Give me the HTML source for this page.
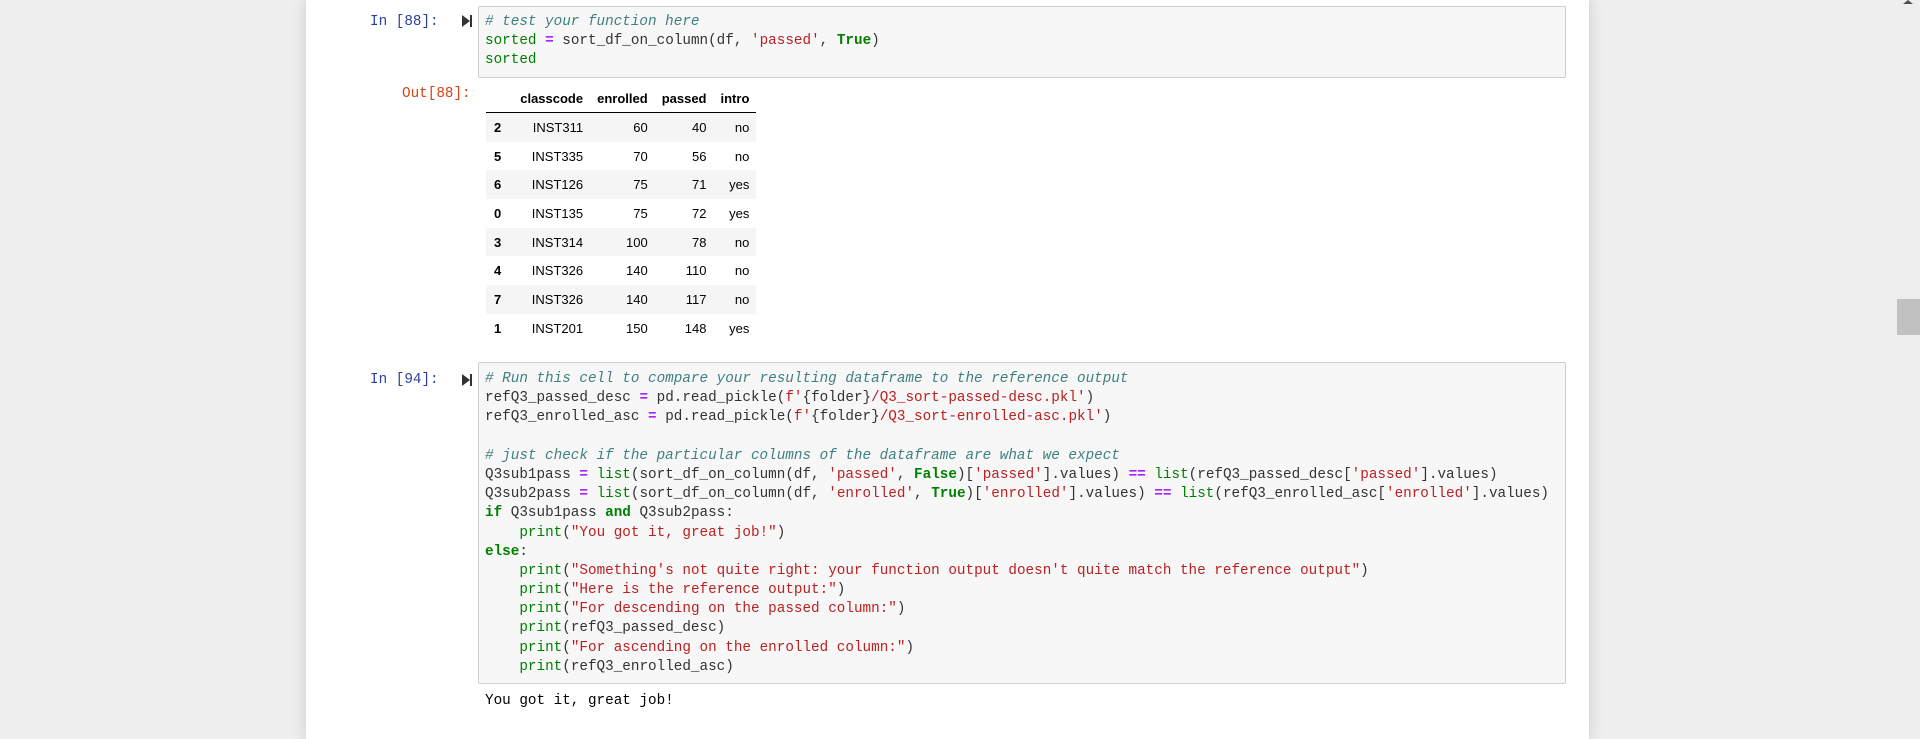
<!DOCTYPE html>
<html><head><meta charset="utf-8"><style>
html,body{margin:0;padding:0;width:1920px;height:739px;overflow:hidden;background:#eeeeee;font-family:"Liberation Sans",sans-serif;}
#nb{position:absolute;left:306px;top:0;width:1283px;height:739px;background:#fff;box-shadow:0 0 12px 1px rgba(87,87,87,0.2);}
.p{position:absolute;font-family:"Liberation Mono",monospace;font-size:14.3px;line-height:20px;white-space:pre;}
.in{color:#303F9F;}
.out{color:#D84315;}
.box{position:absolute;background:#f7f7f7;border:1px solid #cfcfcf;border-radius:2px;}
.code{position:absolute;left:485px;font-family:"Liberation Mono",monospace;font-size:14.3px;color:#333;}
.code div{height:19.2px;line-height:19.2px;white-space:pre;}
.c{color:#408080;font-style:italic}.k{color:#008000;font-weight:bold}.s{color:#BA2121}.o{color:#AA22FF;font-weight:bold}.b{color:#008000}
.run{position:absolute;width:0;height:0;border-top:6px solid transparent;border-bottom:6px solid transparent;border-left:8px solid #333;}
.runb{position:absolute;width:2px;height:12px;background:#333;}
table{position:absolute;left:486px;top:84px;border-collapse:collapse;font-size:13px;color:#000;}
th{font-weight:bold;height:28px;padding:0 7px;text-align:right;border-bottom:1px solid #000;}
td{height:28.7px;padding:0 7px;text-align:right;}
td.i{font-weight:bold;text-align:left;padding-left:8px;}
tbody tr:nth-child(odd){background:#f5f5f5;}
#sb{position:absolute;left:1897px;top:0;width:23px;height:739px;background:#eeeeee;}
#th{position:absolute;left:1897px;top:299px;width:23px;height:36px;background:#c1c1c1;}
</style></head><body>
<div id="nb"></div>
<div class="p in" style="left:370px;top:12px">In [88]:</div>
<div class="run" style="left:462px;top:15px"></div><div class="runb" style="left:470px;top:15px"></div>
<div class="box" style="left:478px;top:6px;width:1086px;height:70px"></div>
<div class="code" style="top:13px"><div><span class="c"># test your function here</span></div><div><span class="b">sorted</span> <span class="o">=</span> sort_df_on_column(df, <span class="s">'passed'</span>, <span class="k">True</span>)</div><div><span class="b">sorted</span></div></div>
<div class="p out" style="left:402px;top:84px">Out[88]:</div>
<table>
<thead><tr><th></th><th style="padding-left:12px">classcode</th><th>enrolled</th><th>passed</th><th>intro</th></tr></thead>
<tbody>
<tr><td class="i">2</td><td>INST311</td><td>60</td><td>40</td><td>no</td></tr>
<tr><td class="i">5</td><td>INST335</td><td>70</td><td>56</td><td>no</td></tr>
<tr><td class="i">6</td><td>INST126</td><td>75</td><td>71</td><td>yes</td></tr>
<tr><td class="i">0</td><td>INST135</td><td>75</td><td>72</td><td>yes</td></tr>
<tr><td class="i">3</td><td>INST314</td><td>100</td><td>78</td><td>no</td></tr>
<tr><td class="i">4</td><td>INST326</td><td>140</td><td>110</td><td>no</td></tr>
<tr><td class="i">7</td><td>INST326</td><td>140</td><td>117</td><td>no</td></tr>
<tr><td class="i">1</td><td>INST201</td><td>150</td><td>148</td><td>yes</td></tr>
</tbody></table>
<div class="p in" style="left:370px;top:370px">In [94]:</div>
<div class="run" style="left:462px;top:374px"></div><div class="runb" style="left:470px;top:374px"></div>
<div class="box" style="left:478px;top:362px;width:1086px;height:320px"></div>
<div class="code" style="top:370px"><div><span class="c"># Run this cell to compare your resulting dataframe to the reference output</span></div><div>refQ3_passed_desc <span class="o">=</span> pd.read_pickle(<span class="s">f'</span>{folder}<span class="s">/Q3_sort-passed-desc.pkl'</span>)</div><div>refQ3_enrolled_asc <span class="o">=</span> pd.read_pickle(<span class="s">f'</span>{folder}<span class="s">/Q3_sort-enrolled-asc.pkl'</span>)</div><div> </div><div><span class="c"># just check if the particular columns of the dataframe are what we expect</span></div><div>Q3sub1pass <span class="o">=</span> <span class="b">list</span>(sort_df_on_column(df, <span class="s">'passed'</span>, <span class="k">False</span>)[<span class="s">'passed'</span>].values) <span class="o">==</span> <span class="b">list</span>(refQ3_passed_desc[<span class="s">'passed'</span>].values)</div><div>Q3sub2pass <span class="o">=</span> <span class="b">list</span>(sort_df_on_column(df, <span class="s">'enrolled'</span>, <span class="k">True</span>)[<span class="s">'enrolled'</span>].values) <span class="o">==</span> <span class="b">list</span>(refQ3_enrolled_asc[<span class="s">'enrolled'</span>].values)</div><div><span class="k">if</span> Q3sub1pass <span class="k">and</span> Q3sub2pass:</div><div>    <span class="b">print</span>(<span class="s">"You got it, great job!"</span>)</div><div><span class="k">else</span>:</div><div>    <span class="b">print</span>(<span class="s">"Something's not quite right: your function output doesn't quite match the reference output"</span>)</div><div>    <span class="b">print</span>(<span class="s">"Here is the reference output:"</span>)</div><div>    <span class="b">print</span>(<span class="s">"For descending on the passed column:"</span>)</div><div>    <span class="b">print</span>(refQ3_passed_desc)</div><div>    <span class="b">print</span>(<span class="s">"For ascending on the enrolled column:"</span>)</div><div>    <span class="b">print</span>(refQ3_enrolled_asc)</div></div>
<div class="code" style="top:692px;color:#000"><div>You got it, great job!</div></div>
<div id="sb"></div><div id="th"></div>
<div style="position:absolute;left:1903px;top:0;width:0;height:0;border-left:5px solid transparent;border-right:5px solid transparent;border-bottom:4px solid #505050"></div>
</body></html>
